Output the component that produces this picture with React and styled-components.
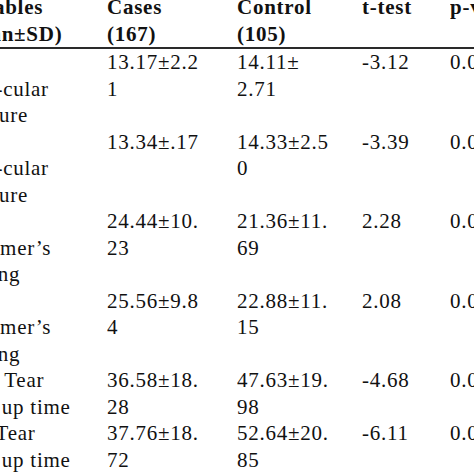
import React from "react";
import styled, { createGlobalStyle } from "styled-components";

const Global = createGlobalStyle`
  html, body {
    margin: 0;
    padding: 0;
    background: #ffffff;
    overflow: hidden;
  }
  body {
    font-family: "Liberation Serif", "Times New Roman", serif;
    color: #111;
  }
`;

const Table = styled.table`
  table-layout: fixed;
  border-collapse: collapse;
  border-spacing: 0;
  width: 599px;
  margin: -6px 0 0 -48px;
  font-family: "Liberation Serif", "Times New Roman", serif;
  font-size: 21px;
  letter-spacing: 0.75px;
  line-height: 26.5px;
  color: #111;
`;

const Col = styled.col`
  width: ${(p) => p.$w}px;
`;

const HeadRow = styled.tr`
  border-bottom: 2px solid #2a2a2a;
`;

const HeadCell = styled.th`
  padding: 0 ${(p) => p.$pr || 0}px 0 0;
  text-align: left;
  vertical-align: top;
  font-weight: bold;
  white-space: normal;
  overflow: hidden;
`;

const Cell = styled.td`
  padding: 0 ${(p) => p.$pr || 0}px 0 0;
  text-align: left;
  vertical-align: top;
  font-weight: normal;
  overflow-wrap: anywhere;
  overflow: hidden;
`;

const Line = styled.span`
  display: block;
  white-space: nowrap;
`;

const rows = [
  { label: ["RE", "Intra-cular", "pressure"], cases: "13.17±2.21", control: "14.11± 2.71", t: "-3.12", p: "0.002" },
  { label: ["LE", "Intra-cular", "pressure"], cases: "13.34±.17", control: "14.33±2.50", t: "-3.39", p: "0.001" },
  { label: ["RE", "Schirmer’s", "reading"], cases: "24.44±10.23", control: "21.36±11.69", t: "2.28", p: "0.023" },
  { label: ["LE", "Schirmer’s", "reading"], cases: "25.56±9.84", control: "22.88±11.15", t: "2.08", p: "0.038" },
  { label: ["Total Tear", "BUT up time"], cases: "36.58±18.28", control: "47.63±19.98", t: "-4.68", p: "0.000" },
  { label: ["Left Tear", "BUT up time"], cases: "37.76±18.72", control: "52.64±20.85", t: "-6.11", p: "0.000" },
];

export default function App() {
  return (
    <>
      <Global />
      <Table>
        <colgroup>
          <Col $w={155} />
          <Col $w={130} />
          <Col $w={125} />
          <Col $w={88} />
          <Col $w={101} />
        </colgroup>
        <thead>
          <HeadRow>
            <HeadCell>
              <Line>Variables</Line>
              <Line>(Mean±SD)</Line>
            </HeadCell>
            <HeadCell $pr={30}>Cases (167)</HeadCell>
            <HeadCell $pr={29}>Control (105)</HeadCell>
            <HeadCell>t-test</HeadCell>
            <HeadCell>
              <Line>p-value</Line>
            </HeadCell>
          </HeadRow>
        </thead>
        <tbody>
          {rows.map((r, i) => (
            <tr key={i}>
              <Cell>
                {r.label.map((l, j) => (
                  <Line key={j}>{l}</Line>
                ))}
              </Cell>
              <Cell $pr={30}>{r.cases}</Cell>
              <Cell $pr={29}>{r.control}</Cell>
              <Cell>{r.t}</Cell>
              <Cell>{r.p}</Cell>
            </tr>
          ))}
        </tbody>
      </Table>
    </>
  );
}
